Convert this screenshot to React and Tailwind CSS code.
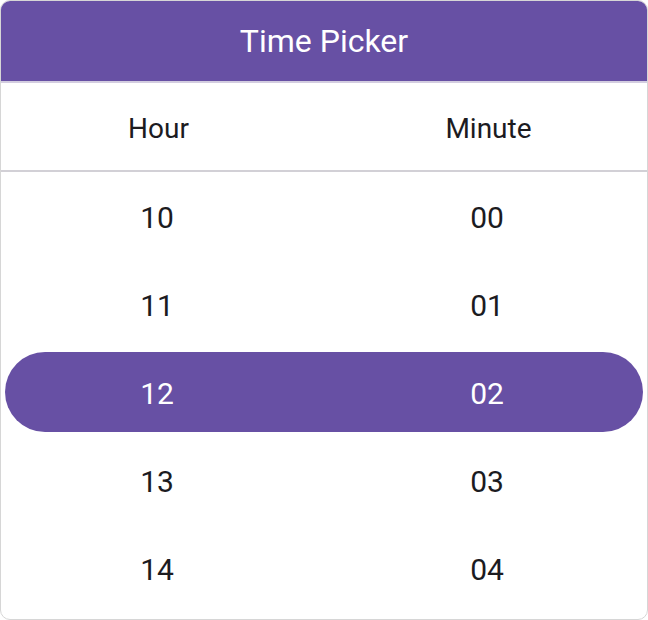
const hours = ['10', '11', '12', '13', '14'];
const minutes = ['00', '01', '02', '03', '04'];
const selected = 2;

export default function App() {
  return (
    <div className="w-[648px] h-[620px] bg-white" style={{ fontFamily: 'Roboto, "Noto Sans", sans-serif' }}>
      <div className="w-full h-full border border-[#d6d6d6] rounded-[10px] overflow-hidden flex flex-col">
        {/* title */}
        <div className="h-[82px] shrink-0 bg-[#6750a4] flex items-center justify-center border-b-2 border-[#d3cde0]">
          <span className="text-white text-[32px] leading-none">Time Picker</span>
        </div>

        {/* column labels */}
        <div className="h-[89px] shrink-0 grid grid-cols-2 gap-[15px] pr-[1px] pt-[4px] items-center border-b-2 border-[#d2d0d6] text-[#1c1b1f] text-[28px]">
          <div className="text-center">Hour</div>
          <div className="text-center">Minute</div>
        </div>

        {/* rows */}
        <div className="flex flex-col">
          {hours.map((h, i) => (
            <div key={h} className="h-[88px] flex items-center px-[4px]">
              <div
                className={
                  i === selected
                    ? 'w-full h-[80px] rounded-full bg-[#6750a4] text-white grid grid-cols-2 gap-[26px] pr-[4px] pt-[3px] items-center text-[30px]'
                    : 'w-full h-[80px] text-[#1c1b1f] grid grid-cols-2 gap-[26px] pr-[4px] pt-[3px] items-center text-[30px]'
                }
              >
                <div className="text-center">{h}</div>
                <div className="text-center">{minutes[i]}</div>
              </div>
            </div>
          ))}
        </div>
      </div>
    </div>
  );
}
